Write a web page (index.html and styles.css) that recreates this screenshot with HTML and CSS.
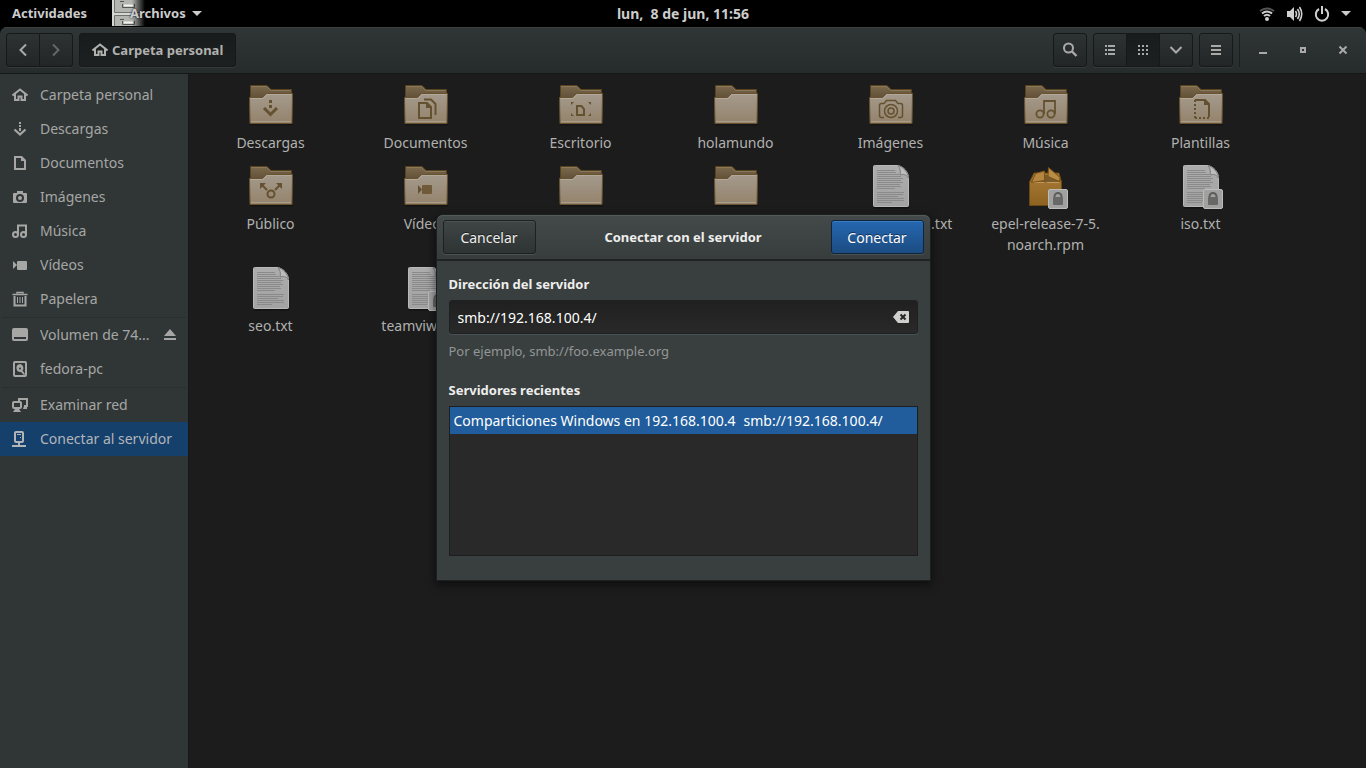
FILE: index.html
```html
<!DOCTYPE html>
<html lang="es">
<head>
    <meta charset="UTF-8">
    <meta name="viewport" content="width=device-width, initial-scale=1.0">
    <title>Carpeta personal</title>
    <link rel="stylesheet" href="styles.css">
</head>
<body>
    <!-- Icon definitions -->
    <svg class="defs" width="0" height="0" aria-hidden="true">
        <defs>
            <linearGradient id="front" x1="0" y1="0" x2="0" y2="1">
                <stop offset="0" stop-color="#a49a8c"/>
                <stop offset="1" stop-color="#94836c"/>
            </linearGradient>
            <linearGradient id="back" x1="0" y1="0" x2="0" y2="1">
                <stop offset="0" stop-color="#7c6a4d"/>
                <stop offset="1" stop-color="#5a4a33"/>
            </linearGradient>
            <linearGradient id="paper" x1="0" y1="0" x2="0" y2="1">
                <stop offset="0" stop-color="#adadad"/>
                <stop offset="1" stop-color="#a2a2a2"/>
            </linearGradient>
            <linearGradient id="carton" x1="0" y1="0" x2="0" y2="1">
                <stop offset="0" stop-color="#a97b37"/>
                <stop offset="1" stop-color="#8d6321"/>
            </linearGradient>
            <linearGradient id="fade" x1="0" y1="0" x2="1" y2="0">
                <stop offset="0.6" stop-color="#000" stop-opacity="0"/>
                <stop offset="1" stop-color="#000"/>
            </linearGradient>
        </defs>
        <symbol id="folder" viewBox="0 0 48 48">
            <path d="M3 43.5h43" stroke="#141414" stroke-width="2"/>
            <path d="M3.500 20V4.500H20L24 8.500H44.500V20z" fill="url(#back)" stroke="#59431f"/>
            <path d="M4.500 5.500H19.500L23.500 9.500H43.500" fill="none" stroke="#8a785a"/>
            <path d="M2.500 16.500H15.500L19.500 12.500H45.500L45 42.500H3z" fill="url(#front)" stroke="#69522e"/>
            <path d="M3.500 17.500H16L20 13.500H44.500" fill="none" stroke="#b2a99c"/>
            <path d="M4 40.500H44" stroke="#a99c88"/>
        </symbol>
        <symbol id="file" viewBox="0 0 48 48">
            <path d="M7 45.500H42" stroke="#111" stroke-width="2"/>
            <path d="M8.500 3.500H31C37 5 41 10 41.500 15V43.500Q41.500 44.500 40.500 44.500H7.500Q6.500 44.500 6.500 43.500V4.500Q6.500 3.500 7.500 3.500z" fill="url(#paper)" stroke="#b8b8b8"/>
            <path d="M10 8.500H28M10 10.500H29M10 12.500H32M10 14.500H34M10 16.500H36M10 18.500H34M10 20.500H36M10 22.500H33M10 24.500H34M10 26.500H28M10 30.500H37M10 32.500H36M10 34.500H31M10 36.500H37M10 38.500H37M10 40.500H25" stroke="#8a8a8a"/>
            <path d="M31 3.500C36 5 41 10 41.500 16C39 12 36 12 33 13C34 9 33 6 31 3.500z" fill="#bdbdbd" stroke="#7c7c7c"/>
        </symbol>
        <symbol id="lock" viewBox="0 0 48 48">
            <rect x="26.500" y="27.500" width="19" height="19" rx="1.500" fill="#a1a1a1" stroke="#bcbcbc"/>
            <path d="M32.500 36V34.500a3.500 3.500 0 0 1 7 0V36" fill="none" stroke="#5c5d5a" stroke-width="2"/>
            <rect x="31" y="35" width="10" height="8" rx="1" fill="#686966"/>
        </symbol>
        <symbol id="package" viewBox="0 0 48 48">
            <path d="M7.500 20L12 11H37L39.500 20V43.500H7.500z" fill="url(#carton)" stroke="#6c4815"/>
            <path d="M9 20L13 13H35L38 20z" fill="#7b5a2c"/>
            <path d="M10 20.500H22M25 20.500H37" stroke="#c39a5d"/>
            <path d="M13.500 11.500L22.500 9V18.500L9.500 20.500z" fill="#b4863f" stroke="#7c5315"/>
            <path d="M26.500 5.500L38 15.500L37.500 19.500L26 14.500z" fill="#b98c46" stroke="#7c5315"/>
        </symbol>
        <symbol id="home" viewBox="0 0 16 16">
            <path d="M0.500 8.500L8 2.500L15.500 8.500" fill="none" stroke="currentColor" stroke-width="2"/>
            <path d="M3 7V13H6.500V9.500H9.500V13H13V7" fill="none" stroke="currentColor" stroke-width="2"/>
        </symbol>
        <symbol id="download" viewBox="0 0 16 16">
            <path d="M7 1h2v2H7zM7 4h2v2H7zM7 7h2v3H7z" fill="currentColor"/>
            <path d="M2.500 8.500L8 13.500L13.500 8.500" fill="none" stroke="currentColor" stroke-width="2.200"/>
        </symbol>
        <symbol id="document" viewBox="0 0 16 16">
            <path d="M3 2H9.500L13 5.500V14H3z" fill="none" stroke="currentColor" stroke-width="2"/>
            <path d="M9 2V6H13z" fill="currentColor"/>
        </symbol>
        <symbol id="camera" viewBox="0 0 16 16">
            <path fill-rule="evenodd" d="M5 2h6v2h3q1 0 1 1v8q0 1-1 1H2q-1 0-1-1V5q0-1 1-1h3zM8 5a4 4 0 1 0 0 8a4 4 0 1 0 0-8z" fill="currentColor"/>
            <circle cx="8" cy="9" r="2" fill="currentColor"/>
        </symbol>
        <symbol id="music" viewBox="0 0 16 16">
            <path d="M6 12V2.500H14V12" fill="none" stroke="currentColor" stroke-width="2"/>
            <circle cx="3.500" cy="11.500" r="2.500" fill="none" stroke="currentColor" stroke-width="2"/>
            <circle cx="11.500" cy="11.500" r="2.500" fill="none" stroke="currentColor" stroke-width="2"/>
        </symbol>
        <symbol id="video" viewBox="0 0 16 16">
            <path d="M1 4L5 8L1 12z" fill="currentColor"/>
            <rect x="5" y="4" width="10" height="9" rx="1" fill="currentColor"/>
        </symbol>
        <symbol id="trash" viewBox="0 0 16 16">
            <path d="M5 2.500V1.500H11V2.500M0.500 3.500H15.500" fill="none" stroke="currentColor" stroke-width="1.500"/>
            <path d="M2.500 5V14.500H13.500V5" fill="none" stroke="currentColor" stroke-width="2"/>
            <path d="M5.500 6V12M8 6V12M10.500 6V12" stroke="currentColor"/>
        </symbol>
        <symbol id="drive" viewBox="0 0 16 16">
            <path fill-rule="evenodd" d="M2 1H14Q16 1 16 3V12Q16 14 14 14H2Q0 14 0 12V3Q0 1 2 1zM2 10V12H14V10z" fill="currentColor"/>
        </symbol>
        <symbol id="disk" viewBox="0 0 16 16">
            <rect x="2" y="1" width="12" height="14" rx="1" fill="none" stroke="currentColor" stroke-width="2"/>
            <path fill-rule="evenodd" d="M8 3a4 4 0 1 0 1 8l3 3 1-1-2.500-3.500A4 4 0 0 0 8 3zM8 6.500a1 1 0 1 1 0 2a1 1 0 1 1 0-2z" fill="currentColor"/>
        </symbol>
        <symbol id="network" viewBox="0 0 16 16">
            <path d="M7 4V2H15V9H12" fill="none" stroke="currentColor" stroke-width="2"/>
            <path d="M12 9h3v3h-4z" fill="currentColor"/>
            <rect x="1" y="5" width="8" height="6" rx="1" fill="none" stroke="currentColor" stroke-width="2"/>
            <path d="M3 12H7L9 15H1z" fill="currentColor"/>
        </symbol>
        <symbol id="server" viewBox="0 0 16 16">
            <rect x="3" y="1" width="8" height="10" rx="1" fill="none" stroke="currentColor" stroke-width="2"/>
            <path d="M5 3.500H9M8 6.500H9" stroke="currentColor"/>
            <path d="M7 11V14M0 15H14" stroke="currentColor" stroke-width="2"/>
        </symbol>
        <symbol id="eject" viewBox="0 0 14 14">
            <path d="M7 1L13 8H1zM1 10H13V12H1z" fill="currentColor"/>
        </symbol>
    </svg>

    <div class="topbar">
        <a href="#" class="activities">Actividades</a>
        <a href="#" class="app-menu">
            <svg class="app-icon" width="33" height="26" viewBox="0 0 33 26" aria-hidden="true">
                <rect width="33" height="26" fill="#d6d7d4"/>
                <rect x="3" y="0" width="30" height="12" fill="#b3b5b1"/>
                <rect x="3" y="16" width="30" height="10" fill="#b3b5b1"/>
                <path d="M2.500 0V12.500H33M2.500 26V15.500H33" fill="none" stroke="#70726e"/>
                <path d="M8 1.500H12M10.500 4V7.500H22.500V4M8 19.500H12M10.500 21V24.500H22.500V21" fill="none" stroke="#555753"/>
                <path d="M12 5.500H21M12 22.500H21" stroke="#f2f2f2" stroke-width="2"/>
                <rect width="33" height="26" fill="url(#fade)"/>
            </svg>
            <span class="app-name">Archivos</span>
            <svg width="10" height="6" viewBox="0 0 10 6" aria-hidden="true"><path d="M0 0H10L5 5z" fill="#ccc"/></svg>
        </a>
        <span class="clock">lun,&nbsp; 8 de jun, 11:56</span>
        <div class="status">
            <svg width="16" height="16" viewBox="0 0 16 16" aria-hidden="true">
                <path d="M1 5Q8 0 15 5" fill="none" stroke="#555" stroke-width="2"/>
                <path d="M3 7.500Q8 3.500 13 7.500M5 10Q8 7.500 11 10" fill="none" stroke="#d0d0d0" stroke-width="2"/>
                <circle cx="8" cy="13" r="2" fill="#d0d0d0"/>
            </svg>
            <svg width="17" height="16" viewBox="0 0 17 16" aria-hidden="true">
                <path d="M1 5H4L8 1V15L4 11H1z" fill="#d0d0d0"/>
                <path d="M9.500 5Q11.500 8 9.500 11M11.500 3Q15 8 11.500 13M13.500 1Q18 8 13.500 15" fill="none" stroke="#d0d0d0" stroke-width="1.600"/>
            </svg>
            <svg width="16" height="16" viewBox="0 0 16 16" aria-hidden="true">
                <path d="M5 3A6.200 6.200 0 1 0 11 3M8 0V8" fill="none" stroke="#d0d0d0" stroke-width="2"/>
            </svg>
            <svg width="10" height="6" viewBox="0 0 10 6" aria-hidden="true"><path d="M0 0H10L5 5z" fill="#ccc"/></svg>
        </div>
    </div>

    <div class="window">
        <div class="headerbar">
            <div class="group">
                <button class="btn" aria-label="Atrás"><svg width="16" height="16" viewBox="0 0 16 16"><path d="M11 2.500L5.500 8L11 13.500" fill="none" stroke="#a9aaa8" stroke-width="2"/></svg></button>
                <button class="btn" aria-label="Adelante" disabled><svg width="16" height="16" viewBox="0 0 16 16"><path d="M5 2.500L10.500 8L5 13.500" fill="none" stroke="#646967" stroke-width="2"/></svg></button>
            </div>
            <button class="btn path active"><svg width="16" height="16"><use href="#home"/></svg>Carpeta personal</button>
            <div class="spacer"></div>
            <button class="btn single" aria-label="Buscar"><svg width="16" height="16" viewBox="0 0 16 16"><circle cx="6.500" cy="6" r="4.500" fill="none" stroke="#a9aaa8" stroke-width="2"/><path d="M10 9.500L14.500 14" stroke="#a9aaa8" stroke-width="2.400"/></svg></button>
            <div class="group">
                <button class="btn" aria-label="Vista de lista"><svg width="16" height="16" viewBox="0 0 16 16"><path d="M3 4H5M6 4H13M3 8H5M6 8H13M3 12H5M6 12H13" stroke="#a9aaa8" stroke-width="2"/></svg></button>
                <button class="btn active" aria-label="Vista de iconos"><svg width="16" height="16" viewBox="0 0 16 16"><path d="M3 4H13M3 8H13M3 12H13" stroke="#a9aaa8" stroke-width="2" stroke-dasharray="2 2"/></svg></button>
                <button class="btn" aria-label="Opciones de vista"><svg width="16" height="16" viewBox="0 0 16 16"><path d="M2.500 5L8 10.500L13.500 5" fill="none" stroke="#a9aaa8" stroke-width="2"/></svg></button>
            </div>
            <button class="btn single" aria-label="Menú"><svg width="16" height="16" viewBox="0 0 16 16"><path d="M3 4H13M3 8H13M3 12H13" stroke="#a9aaa8" stroke-width="2"/></svg></button>
            <div class="window-buttons">
                <button aria-label="Minimizar"><svg width="16" height="16" viewBox="0 0 16 16"><path d="M4 11H12" stroke="#a9aaa8" stroke-width="2"/></svg></button>
                <button aria-label="Restaurar"><svg width="16" height="16" viewBox="0 0 16 16"><rect x="6" y="6" width="4" height="4" fill="none" stroke="#a9aaa8" stroke-width="2"/></svg></button>
                <button aria-label="Cerrar"><svg width="16" height="16" viewBox="0 0 16 16"><path d="M4.500 4.500L11.500 11.500M11.500 4.500L4.500 11.500" stroke="#a9aaa8" stroke-width="2"/></svg></button>
            </div>
        </div>

        <div class="content">
            <nav class="sidebar">
                <a href="#" class="place"><svg width="16" height="16"><use href="#home"/></svg>Carpeta personal</a>
                <a href="#" class="place"><svg width="16" height="16"><use href="#download"/></svg>Descargas</a>
                <a href="#" class="place"><svg width="16" height="16"><use href="#document"/></svg>Documentos</a>
                <a href="#" class="place"><svg width="16" height="16"><use href="#camera"/></svg>Imágenes</a>
                <a href="#" class="place"><svg width="16" height="16"><use href="#music"/></svg>Música</a>
                <a href="#" class="place"><svg width="16" height="16"><use href="#video"/></svg>Vídeos</a>
                <a href="#" class="place"><svg width="16" height="16"><use href="#trash"/></svg>Papelera</a>
                <hr>
                <div class="place">
                    <svg width="16" height="16"><use href="#drive"/></svg>
                    <a href="#" class="volume">Volumen de 74...</a>
                    <button class="eject" aria-label="Expulsar"><svg width="14" height="14"><use href="#eject"/></svg></button>
                </div>
                <a href="#" class="place"><svg width="16" height="16"><use href="#disk"/></svg>fedora-pc</a>
                <hr>
                <a href="#" class="place"><svg width="16" height="16"><use href="#network"/></svg>Examinar red</a>
                <a href="#" class="place selected"><svg width="16" height="16"><use href="#server"/></svg>Conectar al servidor</a>
            </nav>

            <main class="files">
                <div class="item">
                    <svg width="48" height="48" viewBox="0 0 48 48"><use href="#folder"/><path d="M22 19h3v3h-3zM22 24h3v3h-3z" fill="#64512f"/><path d="M17 27L23.500 33.500L30 27" fill="none" stroke="#64512f" stroke-width="3"/></svg>
                    <span>Descargas</span>
                </div>
                <div class="item">
                    <svg width="48" height="48" viewBox="0 0 48 48"><use href="#folder"/><path d="M17 22H25L29 26V37H17zM22 18.500H29L33.500 23V34" fill="none" stroke="#64512f" stroke-width="2"/><path d="M24 22V27H29z" fill="#64512f"/></svg>
                    <span>Documentos</span>
                </div>
                <div class="item">
                    <svg width="48" height="48" viewBox="0 0 48 48"><use href="#folder"/><path d="M20 25H24.500L27 28V34H20z" fill="none" stroke="#64512f" stroke-width="2"/><path d="M14 21h3l-3 3zM34 21v3l-3-3zM14 35v-3l3 3zM34 35h-3l3-3z" fill="#64512f"/></svg>
                    <span>Escritorio</span>
                </div>
                <div class="item">
                    <svg width="48" height="48" viewBox="0 0 48 48"><use href="#folder"/></svg>
                    <span>holamundo</span>
                </div>
                <div class="item">
                    <svg width="48" height="48" viewBox="0 0 48 48"><use href="#folder"/><path d="M17 36.500H14.500Q12.500 36.500 12.500 34.500V24.500Q12.500 22.500 14.500 22.500H17L19.500 19.500H28.500L31 22.500H33.500Q35.500 22.500 35.500 24.500V34.500Q35.500 36.500 33.500 36.500H31" fill="none" stroke="#64512f" stroke-width="1.500"/><circle cx="24" cy="30" r="6.500" fill="none" stroke="#64512f" stroke-width="1.500"/><circle cx="24" cy="30" r="3" fill="none" stroke="#64512f" stroke-width="1.500"/></svg>
                    <span>Imágenes</span>
                </div>
                <div class="item">
                    <svg width="48" height="48" viewBox="0 0 48 48"><use href="#folder"/><g fill="none" stroke="#64512f" stroke-width="1.800"><path d="M22 33V20H33V33"/><circle cx="18" cy="33" r="3.600"/><circle cx="29" cy="33" r="3.600"/></g></svg>
                    <span>Música</span>
                </div>
                <div class="item">
                    <svg width="48" height="48" viewBox="0 0 48 48"><use href="#folder"/><path d="M18 19V38M18 37H33" fill="none" stroke="#64512f" stroke-width="2" stroke-dasharray="2 2"/><path d="M18 19H28L32 23V36" fill="none" stroke="#64512f" stroke-width="2"/><path d="M27 18V24H33z" fill="#64512f"/></svg>
                    <span>Plantillas</span>
                </div>
                <div class="item">
                    <svg width="48" height="48" viewBox="0 0 48 48"><use href="#folder"/><g fill="none" stroke="#64512f" stroke-width="2"><circle cx="24" cy="32" r="3.500"/><path d="M15 23L20 28M33 23L28 28"/></g><path d="M13 21h6l-6 6zM35 21v6l-6-6z" fill="#64512f"/></svg>
                    <span>Público</span>
                </div>
                <div class="item">
                    <svg width="48" height="48" viewBox="0 0 48 48"><use href="#folder"/><path d="M16 23L20 27.500L16 32z" fill="#64512f"/><rect x="20" y="23" width="10" height="9" rx="1" fill="#6f5b39"/></svg>
                    <span>Vídeos</span>
                </div>
                <div class="item">
                    <svg width="48" height="48" viewBox="0 0 48 48"><use href="#folder"/></svg>
                </div>
                <div class="item">
                    <svg width="48" height="48" viewBox="0 0 48 48"><use href="#folder"/></svg>
                </div>
                <div class="item">
                    <svg width="48" height="48" viewBox="0 0 48 48"><use href="#file"/></svg>
                    <span>documentacion.txt</span>
                </div>
                <div class="item">
                    <svg width="48" height="48" viewBox="0 0 48 48"><use href="#package"/><use href="#lock"/></svg>
                    <span>epel-release-7-5.<br>noarch.rpm</span>
                </div>
                <div class="item">
                    <svg width="48" height="48" viewBox="0 0 48 48"><use href="#file"/><use href="#lock"/></svg>
                    <span>iso.txt</span>
                </div>
                <div class="item">
                    <svg width="48" height="48" viewBox="0 0 48 48"><use href="#file"/></svg>
                    <span>seo.txt</span>
                </div>
                <div class="item">
                    <svg width="48" height="48" viewBox="0 0 48 48"><use href="#file"/><use href="#lock"/></svg>
                    <span>teamviwer.txt</span>
                </div>
            </main>
        </div>

        <div class="overlay">
            <form class="dialog" role="dialog" aria-labelledby="dialogTitle">
                <div class="dialog-header">
                    <button type="button" class="dialog-btn">Cancelar</button>
                    <h1 id="dialogTitle">Conectar con el servidor</h1>
                    <button type="button" class="dialog-btn primary">Conectar</button>
                </div>
                <div class="dialog-body">
                    <label for="server-address">Dirección del servidor</label>
                    <div class="entry">
                        <input type="text" id="server-address" value="smb://192.168.100.4/">
                        <button type="button" class="clear" aria-label="Limpiar"><svg width="16" height="12" viewBox="0 0 16 12"><path d="M5 0H15Q16 0 16 1V11Q16 12 15 12H5L0 6z" fill="#cfd0ce"/><path d="M7.500 3.500L12.500 8.500M12.500 3.500L7.500 8.500" stroke="#262626" stroke-width="2"/></svg></button>
                    </div>
                    <p class="hint">Por ejemplo, smb://foo.example.org</p>
                    <h2>Servidores recientes</h2>
                    <div class="recent">
                        <table>
                            <tr class="selected">
                                <td>Comparticiones Windows en 192.168.100.4</td>
                                <td>smb://192.168.100.4/</td>
                            </tr>
                        </table>
                    </div>
                </div>
            </form>
        </div>
    </div>
</body>
</html>
```
FILE: styles.css
```css
* {
    box-sizing: border-box;
}
body {
    margin: 0;
    height: 100vh;
    display: flex;
    flex-direction: column;
    background: #000;
    color: #b0b1af;
    font-family: "Noto Sans", "Open Sans", sans-serif;
    font-size: 14px;
    line-height: 21px;
    overflow: hidden;
}
button,
input {
    font: inherit;
    color: inherit;
}
button {
    padding: 0;
    border: none;
    background: none;
}
a {
    color: inherit;
    text-decoration: none;
}
svg {
    display: block;
    flex: none;
}
.defs {
    position: absolute;
}

/* Top bar */
.topbar {
    position: relative;
    display: flex;
    align-items: center;
    height: 27px;
    padding: 0 15px 0 12px;
    color: #ccc;
    font-size: 13px;
    font-weight: bold;
}
.activities {
    width: 100px;
}
.app-menu {
    position: relative;
    display: flex;
    align-items: center;
    gap: 6px;
    height: 27px;
    margin-right: auto;
    padding-left: 18px;
}
.app-icon {
    position: absolute;
    left: 0;
    top: 0;
}
.app-name {
    position: relative;
    text-shadow: 0 0 2px #000;
}
.clock {
    position: absolute;
    left: 50%;
    transform: translateX(-50%);
    font-size: 14px;
}
.status {
    display: flex;
    align-items: center;
    gap: 11px;
}

/* Window */
.window {
    position: relative;
    flex: 1;
    min-height: 0;
    display: flex;
    flex-direction: column;
    background: #1c1c1c;
    border-radius: 7px 7px 0 0;
    overflow: hidden;
}
.headerbar {
    display: flex;
    align-items: center;
    gap: 6px;
    height: 47px;
    padding: 0 3px 0 6px;
    background: linear-gradient(#303636, #262b2b);
    border-bottom: 1px solid #141717;
    box-shadow: inset 0 1px #3a4040;
}
.group {
    display: flex;
}
.btn {
    display: flex;
    align-items: center;
    justify-content: center;
    width: 34px;
    height: 34px;
    border: 1px solid #161919;
    border-radius: 3px;
    background: linear-gradient(#2d3232, #222626);
    box-shadow: 0 1px #343a3a;
}
.group .btn {
    border-radius: 0;
}
.group .btn + .btn {
    width: 33px;
    border-left: none;
}
.group .btn:first-child {
    border-radius: 3px 0 0 3px;
}
.group .btn:last-child {
    border-radius: 0 3px 3px 0;
}
.btn.active {
    background: linear-gradient(#191c1c, #1c2020);
}
.btn.path {
    width: auto;
    padding: 0 12px;
    gap: 4px;
    font-size: 13px;
    font-weight: bold;
}
.spacer {
    flex: 1;
}
.window-buttons {
    display: flex;
    height: 34px;
    padding-left: 3px;
    border-left: 1px solid #1b1e1e;
}
.window-buttons button {
    display: flex;
    align-items: center;
    justify-content: center;
    width: 40px;
}
.content {
    flex: 1;
    min-height: 0;
    display: flex;
}

/* Sidebar */
.sidebar {
    width: 189px;
    flex: none;
    padding-top: 4px;
    background: #303636;
    border-right: 1px solid #161919;
    line-height: 20px;
}
.place {
    display: flex;
    align-items: center;
    gap: 12px;
    height: 34px;
    padding: 0 11px 0 12px;
    color: #a6a7a5;
    white-space: nowrap;
}
.place.selected {
    background: #15406c;
    color: #b2b5b8;
}
.volume {
    flex: 1;
}
.sidebar hr {
    height: 1px;
    margin: 1px 2px 0;
    border: none;
    background: #292e2e;
}

/* Icon view */
.files {
    flex: 1;
    display: grid;
    grid-template-columns: repeat(auto-fill, 155px);
    align-content: start;
    row-gap: 9px;
    padding: 7px 0 0 4px;
}
.item {
    display: flex;
    flex-direction: column;
    align-items: center;
    gap: 3px;
    text-align: center;
}

/* Dialog */
.overlay {
    position: absolute;
    inset: 0;
    display: flex;
    align-items: center;
    justify-content: center;
}
.dialog {
    width: 495px;
    border: 1px solid #1d2020;
    border-radius: 7px 7px 0 0;
    background: #393f3f;
    color: #eeeeec;
    box-shadow: 0 3px 9px 1px rgba(0, 0, 0, 0.5);
}
.dialog-header {
    display: flex;
    align-items: center;
    justify-content: space-between;
    height: 46px;
    padding: 0 6px;
    border-bottom: 2px solid #1f2323;
    border-radius: 6px 6px 0 0;
    background: linear-gradient(#434a49, #373d3d);
    box-shadow: inset 0 1px #535b5a;
}
h1,
h2 {
    margin: 0;
    font-size: 13px;
    line-height: 21px;
}
.dialog-btn {
    width: 93px;
    height: 34px;
    border: 1px solid #1d2121;
    border-radius: 3px;
    background: linear-gradient(#3f4645, #2e3333);
    box-shadow: inset 0 1px #4b5251, 0 1px #4a5150;
    text-shadow: 0 -1px #1d2121;
}
.dialog-btn.primary {
    border-color: #0e2540;
    background: linear-gradient(#2567b0, #1c4c82);
    box-shadow: inset 0 1px #3a7cc4, 0 1px #4a5150;
    color: #fff;
    text-shadow: 0 -1px #12325a;
}
.dialog-body {
    padding: 13px 12px 24px;
}
.dialog-body label {
    display: block;
    margin-bottom: 5px;
    font-size: 13px;
    font-weight: bold;
}
.entry {
    display: flex;
    align-items: center;
    height: 34px;
    padding: 0 8px;
    border: 1px solid #1d2121;
    border-radius: 3px;
    background: linear-gradient(#202020, #292929);
    box-shadow: 0 1px #4a5150;
}
.entry input {
    flex: 1;
    min-width: 0;
    padding: 0;
    border: none;
    outline: none;
    background: none;
    color: #fff;
}
.hint {
    margin: 7px 0 18px;
    color: #939695;
    font-size: 13px;
}
.recent {
    height: 150px;
    margin-top: 5px;
    border: 1px solid #1c1f1f;
    background: #292929;
}
.recent table {
    width: 100%;
    border-collapse: collapse;
}
.recent td {
    height: 27px;
    padding: 0 4px;
    white-space: nowrap;
}
.recent td:last-child {
    width: 100%;
}
.recent .selected {
    background: #215d9c;
    color: #fff;
}
```
